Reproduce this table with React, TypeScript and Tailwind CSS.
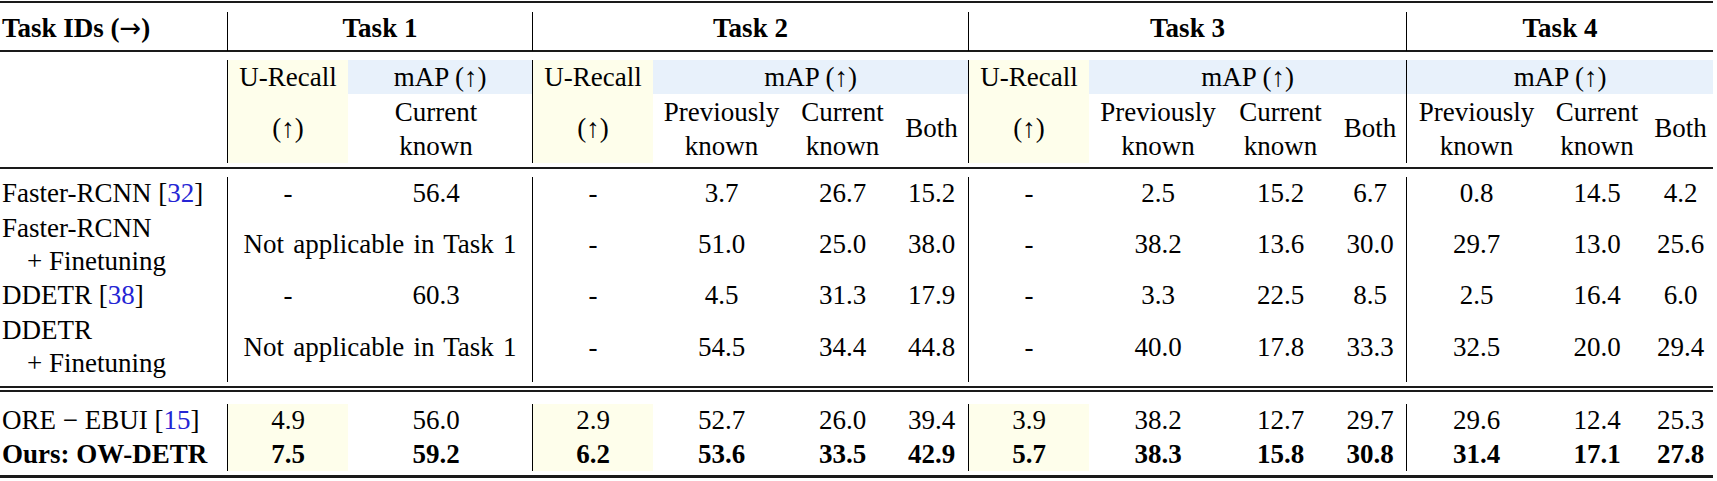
import React from 'react';

const GRID =
  'grid grid-cols-[227px_121px_184px_121px_137px_105px_73px_121px_138px_107px_72px_140px_102px_65px]';
const YELLOW = 'bg-[#fefeeb]';
const BLUE = 'bg-[#e8f1fb]';

const Cite = ({ n }: { n: string }) => (
  <>
    [<span className="text-[#2525d4]">{n}</span>]
  </>
);

// values per row, 13 numeric columns (task1: 2, task2: 4, task3: 4, task4: 3)
const dataRows: { label: React.ReactNode; twoLine?: boolean; na?: boolean; vals: string[] }[] = [
  {
    label: <>Faster-RCNN <Cite n="32" /></>,
    vals: ['-', '56.4', '-', '3.7', '26.7', '15.2', '-', '2.5', '15.2', '6.7', '0.8', '14.5', '4.2'],
  },
  {
    label: 'Faster-RCNN',
    twoLine: true,
    na: true,
    vals: ['-', '51.0', '25.0', '38.0', '-', '38.2', '13.6', '30.0', '29.7', '13.0', '25.6'],
  },
  {
    label: <>DDETR <Cite n="38" /></>,
    vals: ['-', '60.3', '-', '4.5', '31.3', '17.9', '-', '3.3', '22.5', '8.5', '2.5', '16.4', '6.0'],
  },
  {
    label: 'DDETR',
    twoLine: true,
    na: true,
    vals: ['-', '54.5', '34.4', '44.8', '-', '40.0', '17.8', '33.3', '32.5', '20.0', '29.4'],
  },
];

const oursRows: { label: React.ReactNode; bold?: boolean; vals: string[] }[] = [
  {
    label: <>ORE − EBUI <Cite n="15" /></>,
    vals: ['4.9', '56.0', '2.9', '52.7', '26.0', '39.4', '3.9', '38.2', '12.7', '29.7', '29.6', '12.4', '25.3'],
  },
  {
    label: 'Ours: OW-DETR',
    bold: true,
    vals: ['7.5', '59.2', '6.2', '53.6', '33.5', '42.9', '5.7', '38.3', '15.8', '30.8', '31.4', '17.1', '27.8'],
  },
];

// numeric column index (0..12) -> group start / u-recall
const groupStart = [0, 2, 6, 10];
const uRecall = [0, 2, 6];

function Rule({ h = 'h-[2px]' }: { h?: string }) {
  return <div className={`${h} bg-[#1a1a1a]`} />;
}

export default function App() {
  return (
    <div className="w-[1717px] h-[481px] bg-white text-black font-serif text-[27px] leading-[33px]">
      <div className="w-[1713px] font-['Liberation_Serif']">
        <div className="h-px" />
        <Rule />

        {/* task header */}
        <div className="pt-[9px] pb-[5px]">
          <div className={`${GRID} h-[33px] font-bold`}>
            <div className="flex items-center pl-[2px]">
              <span className="mb-[6px] whitespace-nowrap">
                Task IDs (<span className="font-['DejaVu_Sans'] font-normal text-[26px]">→</span>)
              </span>
            </div>
            <div className="col-span-2 border-l border-black flex items-center justify-center">
              <span className="mb-[6px]">Task 1</span>
            </div>
            <div className="col-span-4 border-l border-black flex items-center justify-center">
              <span className="mb-[6px]">Task 2</span>
            </div>
            <div className="col-span-4 border-l border-black flex items-center justify-center">
              <span className="mb-[6px]">Task 3</span>
            </div>
            <div className="col-span-3 border-l border-black flex items-center justify-center">
              <span className="mb-[6px]">Task 4</span>
            </div>
          </div>
        </div>
        <Rule />

        {/* metric header */}
        <div className="pt-[8px] pb-[4px]">
          <div className={`${GRID} grid-rows-[34px_69px]`}>
            <div className="row-span-2" />
            {/* task 1 */}
            <div className={`row-span-2 border-l border-black ${YELLOW} flex flex-col`}>
              <div className="h-[34px] flex items-center justify-center">U-Recall</div>
              <div className="flex-1 flex items-center justify-center">(↑)</div>
            </div>
            <div className={`${BLUE} flex items-center justify-center`}>mAP (↑)</div>
            {/* task 2 */}
            <div className={`row-span-2 border-l border-black ${YELLOW} flex flex-col`}>
              <div className="h-[34px] flex items-center justify-center">U-Recall</div>
              <div className="flex-1 flex items-center justify-center">(↑)</div>
            </div>
            <div className={`col-span-3 ${BLUE} flex items-center justify-center`}>mAP (↑)</div>
            {/* task 3 */}
            <div className={`row-span-2 border-l border-black ${YELLOW} flex flex-col`}>
              <div className="h-[34px] flex items-center justify-center">U-Recall</div>
              <div className="flex-1 flex items-center justify-center">(↑)</div>
            </div>
            <div className={`col-span-3 ${BLUE} flex items-center justify-center`}>mAP (↑)</div>
            {/* task 4 */}
            <div className={`col-span-3 border-l border-black ${BLUE} flex items-center justify-center`}>mAP (↑)</div>

            {/* second line */}
            <div className="flex flex-col items-center justify-center leading-[34px] pr-[8px]">
              <span>Current</span>
              <span>known</span>
            </div>
            {[0, 1, 2].map((g) => (
              <React.Fragment key={g}>
                <div
                  className={`flex flex-col items-center justify-center leading-[34px] ${
                    g === 2 ? 'border-l border-black' : ''
                  }`}
                >
                  <span>Previously</span>
                  <span>known</span>
                </div>
                <div className="flex flex-col items-center justify-center leading-[34px]">
                  <span>Current</span>
                  <span>known</span>
                </div>
                <div className="flex items-center justify-center">Both</div>
              </React.Fragment>
            ))}
          </div>
        </div>
        <Rule />

        {/* baselines */}
        <div className="pt-[8px] pb-[4px]">
          <div className={`${GRID} grid-rows-[33px_69px_33px_70px]`}>
            {dataRows.map((row, ri) => (
              <React.Fragment key={ri}>
                {row.twoLine ? (
                  <div className="flex flex-col justify-center pl-[2px]">
                    <span>{row.label}</span>
                    <span className="pl-[25px]">+ Finetuning</span>
                  </div>
                ) : (
                  <div className="flex items-center pl-[2px] whitespace-nowrap">{row.label}</div>
                )}
                {row.na && (
                  <div className="col-span-2 border-l border-black flex items-center justify-center whitespace-nowrap [word-spacing:2.5px]">
                    Not applicable in Task 1
                  </div>
                )}
                {row.vals.map((v, i) => {
                  const ci = row.na ? i + 2 : i;
                  return (
                    <div
                      key={i}
                      className={`flex items-center justify-center ${
                        groupStart.includes(ci) ? 'border-l border-black' : ''
                      } ${ci === 1 ? 'pr-[8px]' : ''}`}
                    >
                      {v}
                    </div>
                  );
                })}
              </React.Fragment>
            ))}
          </div>
        </div>

        <Rule />
        <div className="h-[2px]" />
        <Rule />

        {/* ours */}
        <div className="pt-[12px] pb-[4px]">
          <div className={`${GRID} grid-rows-[33px_34px]`}>
            {oursRows.map((row, ri) => (
              <React.Fragment key={ri}>
                <div className={`flex items-center pl-[2px] whitespace-nowrap ${row.bold ? 'font-bold' : ''}`}>
                  {row.label}
                </div>
                {row.vals.map((v, i) => (
                  <div
                    key={i}
                    className={`flex items-center justify-center ${row.bold ? 'font-bold' : ''} ${
                      groupStart.includes(i) ? 'border-l border-black' : ''
                    } ${uRecall.includes(i) ? YELLOW : ''} ${i === 1 ? 'pr-[8px]' : ''}`}
                  >
                    {v}
                  </div>
                ))}
              </React.Fragment>
            ))}
          </div>
        </div>
        <Rule h="h-[3px]" />
      </div>
    </div>
  );
}
